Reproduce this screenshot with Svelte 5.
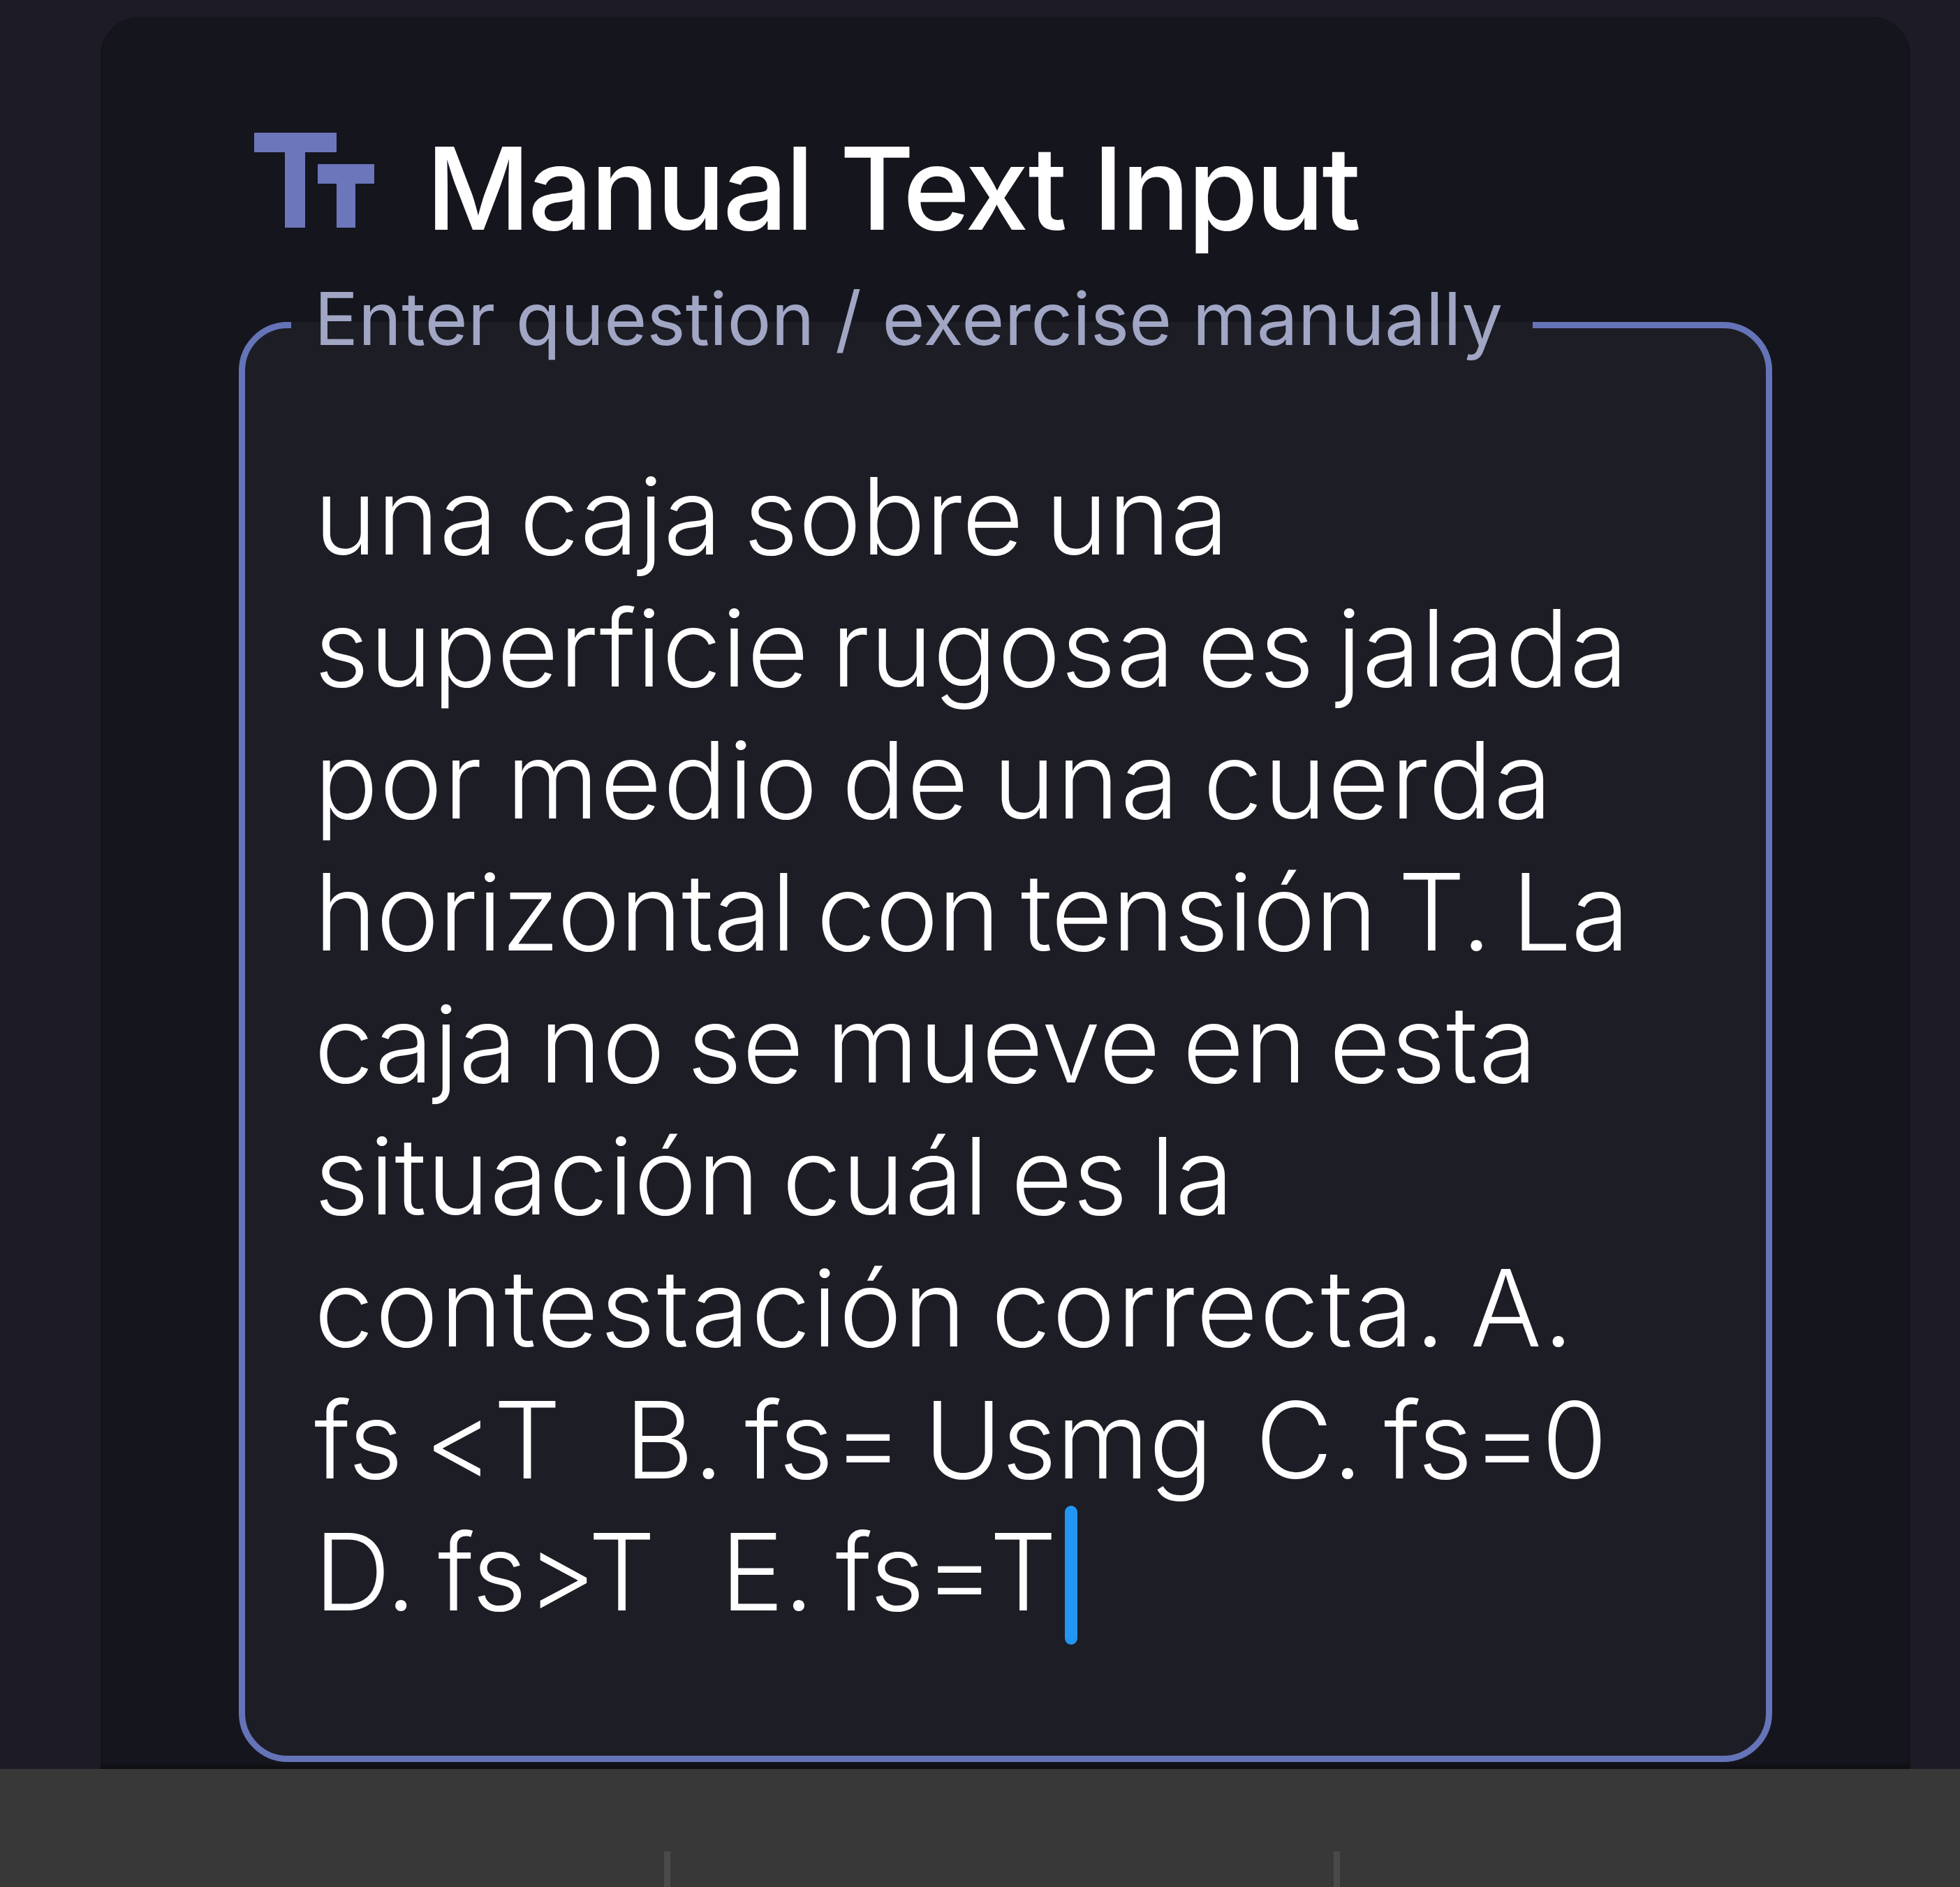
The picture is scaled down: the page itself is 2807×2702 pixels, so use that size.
<script>
	// track: letter-spacing per line, the installed font runs a little off the original's widths
	const lines = [
		{ text: 'una caja sobre una', track: 0.2 },
		{ text: 'superficie rugosa es jalada', track: 0.8 },
		{ text: 'por medio de una cuerda', track: 2 },
		{ text: 'horizontal con tensión T. La', track: -0.7 },
		{ text: 'caja no se mueve en esta', track: 0.5 },
		{ text: 'situación cuál es la', track: 0.7 },
		{ text: 'contestación correcta. A.', track: 2.6 },
		{ text: 'fs <T   B. fs= Usmg  C. fs=0', track: -0.2 },
		{ text: 'D. fs>T   E. fs=T', track: 0.2 }
	];
</script>

<div class="screen">
	<section class="card">
		<header class="title-row">
			<svg class="tt-icon" viewBox="0 0 172 136" aria-hidden="true">
				<path d="M0 0H118V28H73V136H44V28H0Z" />
				<path d="M91 45H172V73H145V136H118V73H91Z" />
			</svg>
			<h1>Manual Text Input</h1>
		</header>
		<fieldset class="field">
			<legend>Enter question / exercise manually</legend>
			<div class="value">
				{#each lines as line, i}
					<div class="line" style="letter-spacing: {line.track}px">{line.text}{#if i === lines.length - 1}<span class="caret"></span>{/if}</div>
				{/each}
			</div>
		</fieldset>
	</section>
	<footer class="bar">
		<span class="tick"></span>
		<span class="tick"></span>
	</footer>
</div>

<style>
	:global(body) {
		background: #1d1c26;
	}
	.screen {
		height: 2702px;
		display: flex;
		flex-direction: column;
		overflow: hidden;
		font-family: 'Inter', 'Noto Sans', sans-serif;
	}
	.card {
		flex: 1;
		min-height: 0;
		margin: 24px 71px 0 144px;
		padding: 160px 198px 0 198px;
		background: #15151d;
		border-radius: 56px 56px 0 0;
		box-shadow: inset 0 -5px 4px #0f0f12;
	}
	.title-row {
		display: flex;
		align-items: center;
		gap: 74px;
		height: 170px;
		margin-left: 22px;
	}
	.tt-icon {
		width: 172px;
		height: 136px;
		margin-bottom: 22px;
		fill: #6b76bb;
		flex: none;
	}
	h1 {
		margin: 0;
		font-size: 164px;
		font-weight: 480;
		letter-spacing: -3.7px;
		color: #fff;
		white-space: nowrap;
	}
	.field {
		margin: 39px 0 0;
		padding: 108px 0 0 99px;
		height: 2130px;
		box-sizing: border-box;
		background: #1d1d26;
		border: 9px solid #6574b8;
		border-radius: 70px;
	}
	legend {
		margin-left: -33px;
		padding: 0 43px 18px 33px;
		font-size: 105px;
		color: #a0a6c4;
		line-height: 1.2;
		white-space: nowrap;
	}
	.value {
		font-size: 152px;
		font-weight: 300;
		line-height: 189px;
		word-spacing: -12px;
		color: #fff;
	}
	.line {
		white-space: pre;
	}
	/* drawn over the line, so it must not grow the line box */
	.caret {
		display: inline-block;
		width: 18px;
		height: 199px;
		margin: -150px 0 -49px 11px;
		background: #2196f3;
		border-radius: 9px;
	}
	.bar {
		flex: none;
		height: 169px;
		display: flex;
		align-items: flex-end;
		gap: 950px;
		padding-left: 951px;
		background: #383838;
	}
	.tick {
		width: 9px;
		height: 51px;
		background: #4a4a4a;
	}
</style>
